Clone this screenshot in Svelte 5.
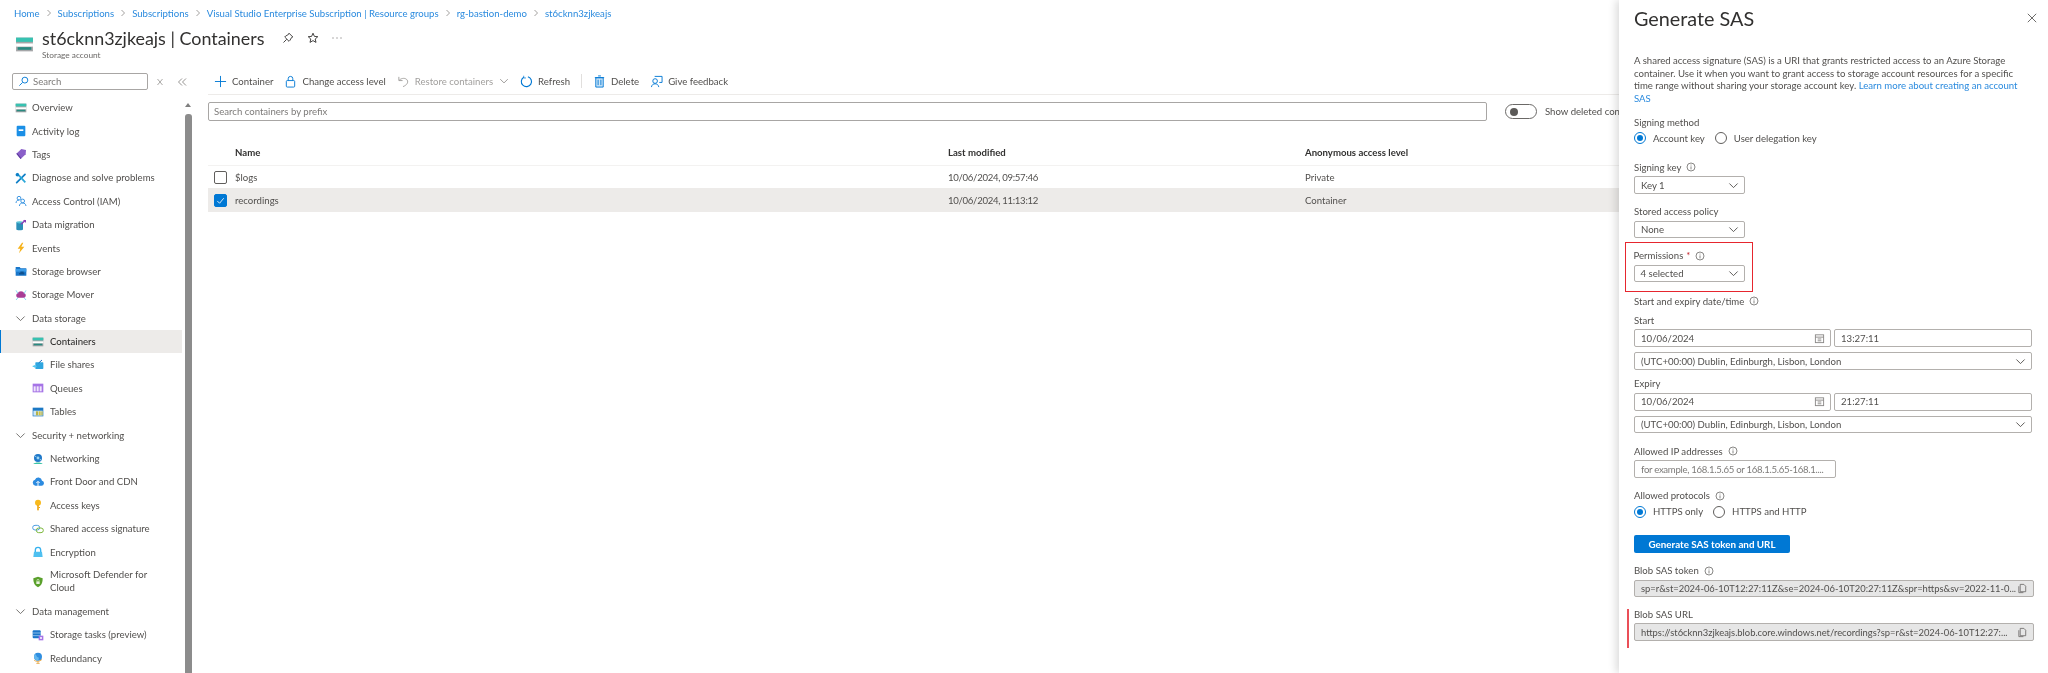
<script lang="ts">
  // inner markup of the 18x18 service icons
  const icons: Record<string, string> = {
    storage: '<rect x="1" y="2.5" width="16" height="13" fill="#a5a6a8"/><rect x="1" y="2.5" width="16" height="4" fill="#37c2b1"/><rect x="1" y="8" width="16" height="3" fill="#fff"/><rect x="2.5" y="11.5" width="13" height="2.5" fill="#2a8a80"/>',
    log: '<rect x="2.5" y="1" width="13" height="16" rx="1.5" fill="#1b8fe6"/><rect x="5.5" y="6.5" width="7" height="2.5" fill="#fff"/>',
    tag: '<path d="M2 8.5 9.5 1.5 16.5 3 16 9.5 8.5 16.5Z" fill="#8a5fc9"/><path d="M2 8.5 8.5 16.5 9.5 15.5 3.5 8Z" fill="#5c3a9c"/>',
    tools: '<path d="M2.5 16 15 3.5" stroke="#0f7fc7" stroke-width="2.6" stroke-linecap="round"/><path d="M3 2 15.5 15.5" stroke="#2aa7d8" stroke-width="2.6"/><circle cx="3.5" cy="4" r="2.6" fill="#0f7fc7"/>',
    iam: '<circle cx="6" cy="4.8" r="2.8" fill="none" stroke="#2f8fe0" stroke-width="1.4"/><path d="M1.5 12c.5-3.5 2-4.5 4.5-4.5" fill="none" stroke="#2f8fe0" stroke-width="1.4"/><circle cx="11.5" cy="9" r="2.8" fill="none" stroke="#2f8fe0" stroke-width="1.4"/><path d="M6.5 16.5c.5-3 2-4.5 5-4.5s4.5 1.5 5 4.5" fill="none" stroke="#2f8fe0" stroke-width="1.4"/>',
    migrate: '<path d="M2 5h10v10.5a5 1.5 0 0 1-10 0Z" fill="#2a8fb8"/><ellipse cx="7" cy="5" rx="5" ry="1.6" fill="#59c2d6"/><path d="M9 8 15.5 2" stroke="#8a3fb5" stroke-width="2.2"/><path d="M12 1.5h4.5V6Z" fill="#8a3fb5"/>',
    bolt: '<path d="M10.5 1 4 10h4l-2 7 8-10H9.5l3-6Z" fill="#f6b21b"/>',
    folder: '<path d="M1 3h6l1.5 2H17v11H1Z" fill="#1976c9"/><path d="M1 6h16v4H1Z" fill="#3a9be8"/><rect x="8" y="10" width="5" height="1.5" fill="#0b3f75"/><rect x="6" y="12.5" width="8" height="1.5" fill="#0b3f75"/>',
    mover: '<path d="M4 13a3.5 3.5 0 0 1 0-6.5 5.5 5.5 0 0 1 10 0 3.5 3.5 0 0 1 0 6.5Z" fill="#a83c96"/><path d="M1.5 2 4.5 7M16.5 2 13.5 7M4.5 13l-3 3.5M13.5 13l3 3.5" stroke="#50c8ef" stroke-width="1"/>',
    share: '<rect x="5" y="5" width="12" height="10" rx="1" fill="#2fa6e0"/><path d="M1 11h6" stroke="#50c8ef" stroke-width="1.6"/><path d="M1 11 4.5 9v4Z" fill="#50c8ef"/><path d="M10 6 15 1.5" stroke="#1b6fc2" stroke-width="1.5"/>',
    queue: '<rect x="1" y="2.5" width="16" height="13" fill="#a674e6"/><rect x="2.5" y="6.5" width="3" height="7.5" fill="#efe6fb"/><rect x="7" y="6.5" width="3" height="7.5" fill="#efe6fb"/><rect x="11.5" y="6.5" width="3" height="7.5" fill="#efe6fb"/>',
    table: '<rect x="1" y="2.5" width="16" height="13" fill="#1b78c4"/><rect x="2" y="7" width="14" height="7.5" fill="#cfe7f5"/><rect x="6" y="8" width="3" height="6" fill="#b7b34a"/><rect x="10" y="8" width="3" height="6" fill="#d5c43c"/><rect x="14" y="8" width="2" height="6" fill="#b7b34a"/>',
    net: '<circle cx="9" cy="7.5" r="6" fill="#1f78c9"/><circle cx="9" cy="7.5" r="2.2" fill="#9ed6f3"/><circle cx="5.5" cy="5" r="1" fill="#9ed6f3"/><circle cx="12.5" cy="10" r="1" fill="#9ed6f3"/><path d="M2 16.5c2-3 12-3 14 0Z" fill="#3dc4a6"/>',
    door: '<path d="M5 14.5a4.5 4.5 0 0 1-.5-8.8 5.5 5.5 0 0 1 10.5 1.3 3.8 3.8 0 0 1-1 7.5Z" fill="#2c8be0"/><path d="M9 16.5V8.5M6.5 10.5 9 8l2.5 2.5" fill="none" stroke="#fff" stroke-width="1.4"/>',
    key: '<circle cx="9" cy="5.5" r="4.5" fill="#f8b91c"/><rect x="7.8" y="9" width="2.4" height="8" fill="#f0a30a"/><rect x="10" y="12" width="2" height="1.5" fill="#f0a30a"/>',
    sas: '<rect x="1" y="3.5" width="10.5" height="7" rx="3.5" fill="none" stroke="#4f9fe0" stroke-width="1.5"/><rect x="6.5" y="7.5" width="10.5" height="7" rx="3.5" fill="none" stroke="#7db83c" stroke-width="1.5"/>',
    lock: '<path d="M5 9V6a4 4 0 0 1 8 0v3" fill="none" stroke="#35b1ee" stroke-width="2"/><path d="M3 8.5h12l1 8H2Z" fill="#4fc0f0"/>',
    shield: '<path d="M9 1 16 3.5c0 7-2 11-7 13.5C4 14.5 2 10.5 2 3.5Z" fill="#5aa02c"/><rect x="6.5" y="8" width="5" height="4" fill="#e8f3dc"/><path d="M7.5 8V6.5a1.5 1.5 0 0 1 3 0V8" fill="none" stroke="#e8f3dc" stroke-width="1"/>',
    tasks: '<rect x="1" y="2" width="12" height="12" rx="1.5" fill="#1b75c9"/><path d="M1 6h12M1 10h12" stroke="#bfe0f7" stroke-width="1"/><rect x="10" y="10" width="7" height="7" fill="#a674e6"/><rect x="12" y="12" width="3" height="3" fill="#e7dbf9"/>',
    globe: '<circle cx="9" cy="7" r="6" fill="#2f8ee0"/><path d="M5 3c2 2 2 5 4 5s1 4 0 5c-3 0-6-3-6-6s1-3 3-4Z" fill="#63b7ee"/><path d="M3 12c3 3 8 3 12-1M9 14v3M6.5 17h5" fill="none" stroke="#e8a33d" stroke-width="1.3"/>'
  };

  type Row = { label: string; icon?: string; sub?: boolean; group?: boolean; active?: boolean };

  const nav: Row[] = [
    { label: 'Overview', icon: 'storage' },
    { label: 'Activity log', icon: 'log' },
    { label: 'Tags', icon: 'tag' },
    { label: 'Diagnose and solve problems', icon: 'tools' },
    { label: 'Access Control (IAM)', icon: 'iam' },
    { label: 'Data migration', icon: 'migrate' },
    { label: 'Events', icon: 'bolt' },
    { label: 'Storage browser', icon: 'folder' },
    { label: 'Storage Mover', icon: 'mover' },
    { label: 'Data storage', group: true },
    { label: 'Containers', icon: 'storage', sub: true, active: true },
    { label: 'File shares', icon: 'share', sub: true },
    { label: 'Queues', icon: 'queue', sub: true },
    { label: 'Tables', icon: 'table', sub: true },
    { label: 'Security + networking', group: true },
    { label: 'Networking', icon: 'net', sub: true },
    { label: 'Front Door and CDN', icon: 'door', sub: true },
    { label: 'Access keys', icon: 'key', sub: true },
    { label: 'Shared access signature', icon: 'sas', sub: true },
    { label: 'Encryption', icon: 'lock', sub: true },
    { label: 'Microsoft Defender for Cloud', icon: 'shield', sub: true },
    { label: 'Data management', group: true },
    { label: 'Storage tasks (preview)', icon: 'tasks', sub: true },
    { label: 'Redundancy', icon: 'globe', sub: true }
  ];

  const crumbs = ['Home', 'Subscriptions', 'Subscriptions', 'Visual Studio Enterprise Subscription | Resource groups', 'rg-bastion-demo', 'st6cknn3zjkeajs'];

  const containers = [
    { name: '$logs', modified: '10/06/2024, 09:57:46', access: 'Private', selected: false },
    { name: 'recordings', modified: '10/06/2024, 11:13:12', access: 'Container', selected: true }
  ];

  const timezone = '(UTC+00:00) Dublin, Edinburgh, Lisbon, London';
</script>

{#snippet chevron()}
  <svg class="chev" viewBox="0 0 12 12"><path d="M1.5 3.8 6 8.3l4.5-4.5" fill="none" stroke="currentColor" stroke-width="1"/></svg>
{/snippet}

{#snippet info()}
  <svg class="info" viewBox="0 0 10 10"><circle cx="5" cy="5" r="4" fill="none" stroke="#6b6967" stroke-width=".8"/><path d="M5 4.4v3M5 2.6v.9" stroke="#6b6967" stroke-width=".8"/></svg>
{/snippet}

{#snippet select(value: string, cls: string)}
  <div class="control select {cls}"><span>{value}</span>{@render chevron()}</div>
{/snippet}

{#snippet radio(label: string, on: boolean)}
  <span class="radio" class:on><i></i></span><span class="radio-label">{label}</span>
{/snippet}

{#snippet copy()}
  <svg class="copy" viewBox="0 0 12 12"><path d="M3.5 1.5h4l2 2v6h-6Z" fill="none" stroke="#6b6967" stroke-width=".9"/><path d="M2 3.5v7h5" fill="none" stroke="#6b6967" stroke-width=".9"/></svg>
{/snippet}

{#snippet dateRow(date: string, time: string)}
  <div class="date-row">
    <div class="control date">
      <span>{date}</span>
      <svg class="cal" viewBox="0 0 12 12"><rect x="1.5" y="2" width="9" height="8.5" fill="none" stroke="#8a8886"/><path d="M1.5 4.5h9M4 6.5h4M4 8.5h4" stroke="#8a8886"/></svg>
    </div>
    <div class="control time">{time}</div>
  </div>
{/snippet}

<div class="page">
  <nav class="crumbs">
    {#each crumbs as crumb, i}
      {#if i > 0}<svg class="sep" viewBox="0 0 8 8"><path d="M2.5 1 5.5 4l-3 3" fill="none" stroke="#8a8886" stroke-width=".8"/></svg>{/if}
      <a href="#top">{crumb}</a>
    {/each}
  </nav>

  <header class="title-row">
    <svg class="title-icon" viewBox="0 0 18 18">{@html icons.storage}</svg>
    <div class="title-text">
      <h1>st6cknn3zjkeajs | Containers</h1>
      <div class="subtitle">Storage account</div>
    </div>
    <svg class="head-act pin" viewBox="0 0 12 12"><path d="M7 1.2 10.8 5 9.6 5.5 7.8 8.5 7 9.3 2.7 5 3.5 4.2 6.5 2.4ZM4.7 7.3 1.5 10.5" fill="none" stroke="#323130" stroke-width=".9"/></svg>
    <svg class="head-act star" viewBox="0 0 12 12"><path d="M6 1.2 7.4 4.4 10.8 4.7 8.2 7 9 10.4 6 8.6 3 10.4 3.8 7 1.2 4.7 4.6 4.4Z" fill="none" stroke="#323130" stroke-width=".9"/></svg>
    <svg class="head-act more" viewBox="0 0 12 12"><path d="M1.5 6h1M5.5 6h1M9.5 6h1" stroke="#605e5c"/></svg>
  </header>

  <div class="body">
    <aside class="sidebar">
      <div class="side-tools">
        <div class="side-search">
          <svg viewBox="0 0 12 12"><circle cx="7.5" cy="4.5" r="3.2" fill="none" stroke="#0078d4"/><path d="M5 7 1.5 10.5" stroke="#0078d4"/></svg>
          <span>Search</span>
        </div>
        <svg class="side-btn clear" viewBox="0 0 10 10"><path d="M2.5 2 7.5 8M7.5 2 2.5 8" stroke="#a19f9d" stroke-width=".9"/></svg>
        <svg class="side-btn collapse" viewBox="0 0 10 10"><path d="M5 1.5 1.5 5 5 8.5M9 1.5 5.5 5 9 8.5" fill="none" stroke="#8a8886" stroke-width=".9"/></svg>
      </div>
      <div class="nav-wrap">
        <ul class="nav">
          {#each nav as row}
            <li class:sub={row.sub} class:active={row.active} class:tall={row.label.startsWith('Microsoft')}>
              {#if row.group}
                <span class="group-chev">{@render chevron()}</span>
              {:else}
                <svg class="nav-icon" viewBox="0 0 18 18">{@html icons[row.icon ?? 'storage']}</svg>
              {/if}
              <span class="nav-label">{row.label}</span>
            </li>
          {/each}
        </ul>
        <div class="scrollbar"><b></b><span></span></div>
      </div>
    </aside>

    <main class="main">
      <div class="toolbar">
        <button>
          <svg viewBox="0 0 14 14"><path d="M7 1v12M1 7h12" stroke="#0078d4" stroke-width="1"/></svg>Container
        </button>
        <button>
          <svg viewBox="0 0 14 14"><rect x="2.5" y="6" width="9" height="7" rx="1" fill="none" stroke="#0078d4"/><path d="M4.5 6V4a2.5 2.5 0 0 1 5 0v2" fill="none" stroke="#0078d4"/></svg>Change access level
        </button>
        <button class="disabled">
          <svg viewBox="0 0 14 14"><path d="M2 2v4h4M2.5 5.5C5 3 9.5 3 11 5.5S10.5 11 6.5 12.5" fill="none" stroke="#a19f9d"/></svg>Restore containers{@render chevron()}
        </button>
        <button>
          <svg viewBox="0 0 14 14"><path d="M8.5 1.8A5.5 5.5 0 1 1 4 2.4" fill="none" stroke="#0078d4" stroke-width="1.2"/><path d="M4 .8v2.4h2.4" fill="none" stroke="#0078d4" stroke-width=".8"/></svg>Refresh
        </button>
        <span class="divider"></span>
        <button>
          <svg viewBox="0 0 14 14"><path d="M3 3h8v10H3Z" fill="#d0e7f8" stroke="#0078d4"/><path d="M2 2.8h10M5.5 1h3M5.5 5v6M8.5 5v6" stroke="#0078d4"/></svg>Delete
        </button>
        <button>
          <svg viewBox="0 0 14 14"><path d="M5 1.5h8V8H10" fill="none" stroke="#0078d4"/><circle cx="5.5" cy="6.5" r="2.5" fill="none" stroke="#0078d4"/><path d="M1.5 13c.5-2.5 2-3.5 4-3.5s3.5 1 4 3.5" fill="none" stroke="#0078d4"/></svg>Give feedback
        </button>
      </div>

      <div class="filter-row">
        <div class="prefix">Search containers by prefix</div>
        <span class="toggle"><i></i></span>
        <span class="toggle-label">Show deleted containers</span>
      </div>

      <div class="table">
        <div class="tr head">
          <span></span><span>Name</span><span>Last modified</span><span>Anonymous access level</span>
        </div>
        {#each containers as c}
          <div class="tr" class:selected={c.selected}>
            <span class="check" class:on={c.selected}>
              {#if c.selected}<svg viewBox="0 0 12 12"><path d="M2.5 6.5 5 9l4.5-5.5" fill="none" stroke="#fff" stroke-width=".9"/></svg>{/if}
            </span>
            <span>{c.name}</span><span class="stamp">{c.modified}</span><span>{c.access}</span>
          </div>
        {/each}
      </div>
    </main>
  </div>

  <!-- context pane lies over the blade -->
  <section class="pane">
    <div class="pane-head">
      <h2>Generate SAS</h2>
      <svg viewBox="0 0 10 10"><path d="M.8.8l8.4 8.4M9.2.8.8 9.2" stroke="#484644" stroke-width=".8"/></svg>
    </div>
    <p class="intro">
      A shared access signature (SAS) is a URI that grants restricted access to an Azure Storage<br />
      container. Use it when you want to grant access to storage account resources for a specific<br />
      time range without sharing your storage account key. <a href="#top">Learn more about creating an account<br />
      SAS</a>
    </p>

    <div class="label m-10">Signing method</div>
    <div class="radios m-2">
      {@render radio('Account key', true)}
      {@render radio('User delegation key', false)}
    </div>

    <div class="label m-15">Signing key {@render info()}</div>
    {@render select('Key 1', 'short m-2')}

    <div class="label m-11">Stored access policy</div>
    {@render select('None', 'short m-2')}

    <div class="callout">
      <div class="label">Permissions <em>*</em> {@render info()}</div>
      {@render select('4 selected', 'short m-2')}
    </div>

    <div class="label m-2">Start and expiry date/time {@render info()}</div>
    <div class="label m-5">Start</div>
    <div class="m-2">{@render dateRow('10/06/2024', '13:27:11')}</div>
    {@render select(timezone, 'm-5')}

    <div class="label m-7">Expiry</div>
    <div class="m-2">{@render dateRow('10/06/2024', '21:27:11')}</div>
    {@render select(timezone, 'm-5')}

    <div class="label m-11">Allowed IP addresses {@render info()}</div>
    <div class="control ip m-2"><span class="placeholder">for example, 168.1.5.65 or 168.1.5.65-168.1....</span></div>

    <div class="label m-11">Allowed protocols {@render info()}</div>
    <div class="radios m-2 protocols">
      {@render radio('HTTPS only', true)}
      {@render radio('HTTPS and HTTP', false)}
    </div>

    <button class="primary m-16">Generate SAS token and URL</button>

    <div class="label m-11">Blob SAS token {@render info()}</div>
    <div class="control readonly m-2">
      <span>sp=r&amp;st=2024-06-10T12:27:11Z&amp;se=2024-06-10T20:27:11Z&amp;spr=https&amp;sv=2022-11-0...</span>{@render copy()}
    </div>

    <div class="url-field m-10">
      <div class="label">Blob SAS URL</div>
      <div class="control readonly m-2">
        <span>https://st6cknn3zjkeajs.blob.core.windows.net/recordings?sp=r&amp;st=2024-06-10T12:27:...</span>{@render copy()}
      </div>
    </div>
  </section>
</div>

<style>
  :global(body) {
    margin: 0;
    background: #fff;
  }

  .page {
    position: relative;
    width: 2048px;
    height: 673px;
    overflow: hidden;
    font-family: Lato, "Noto Sans", sans-serif;
    font-size: 9.6px;
    color: #514f4d;
    filter: blur(0.3px);
  }

  a {
    color: #2a8ade;
    text-decoration: none;
  }

  /* header */
  .crumbs {
    display: flex;
    align-items: center;
    height: 26px;
    padding-left: 14px;
    gap: 4px;
  }

  .sep {
    width: 8px;
    height: 8px;
    margin: 0 1px;
  }

  .title-row {
    display: flex;
    align-items: flex-start;
    height: 40px;
    padding-left: 15px;
  }

  .title-icon {
    width: 19px;
    height: 19px;
    margin: 9px 8px 0 0;
  }

  .title-text {
    width: 228px;
  }

  h1 {
    margin: 0;
    font-size: 17.9px;
    font-weight: 400;
    line-height: 24px;
    color: #323130;
    white-space: nowrap;
  }

  .subtitle {
    font-size: 8.3px;
    line-height: 10px;
    color: #6b6967;
    margin-top: 0;
  }

  .head-act {
    width: 12px;
    height: 12px;
    margin-top: 6px;
  }

  .pin {
    margin-left: 12px;
  }

  .star {
    margin-left: 13px;
  }

  .more {
    margin-left: 12px;
  }

  .body {
    display: flex;
  }

  /* sidebar */
  .sidebar {
    width: 192px;
    flex: none;
  }

  .side-tools {
    display: flex;
    align-items: center;
    padding: 7px 0 6px 12px;
    height: 17px;
  }

  .side-search {
    display: flex;
    align-items: center;
    gap: 4px;
    width: 136px;
    height: 17px;
    box-sizing: border-box;
    border: 1px solid #a8a6a4;
    border-radius: 2px;
    padding-left: 5px;
    color: #7d7b79;
  }

  .side-search svg {
    width: 11px;
    height: 11px;
  }

  .side-btn {
    width: 10px;
    height: 10px;
  }

  .clear {
    margin-left: 7px;
  }

  .collapse {
    margin-left: 12px;
  }

  .nav-wrap {
    display: flex;
    height: 577px;
    overflow: hidden;
  }

  .nav {
    list-style: none;
    margin: 0;
    padding: 0;
    width: 182px;
    flex: none;
  }

  .nav li {
    display: flex;
    align-items: center;
    height: 23.4px;
    padding-left: 15px;
    box-sizing: border-box;
    white-space: nowrap;
  }

  .nav li.tall {
    height: 36px;
    line-height: 12.6px;
    white-space: normal;
  }

  .tall .nav-label {
    width: 108px;
    flex: none;
  }

  .nav li.sub {
    padding-left: 32px;
  }

  .nav li.active {
    background: #edebe9;
    box-shadow: inset 1px 0 0 #0078d4;
    color: #323130;
    font-weight: 500;
  }

  .nav-icon {
    width: 12px;
    height: 12px;
    flex: none;
    margin-right: 5px;
  }

  .sub .nav-icon {
    margin-right: 6px;
  }

  .group-chev {
    display: flex;
    width: 12px;
    margin-right: 5px;
    color: #6b6967;
  }

  .scrollbar {
    position: relative;
    width: 8px;
    margin-left: 2px;
  }

  .scrollbar b {
    display: block;
    width: 0;
    height: 0;
    margin: 7px 0 0 0.5px;
    border: 3.5px solid transparent;
    border-top: 0;
    border-bottom: 4px solid #7f7f7f;
  }

  .scrollbar span {
    display: block;
    width: 7px;
    height: 600px;
    margin: 7px 0 0 0.5px;
    background: #8c8c8c;
    border-radius: 3px 3px 0 0;
  }

  /* main blade */
  .main {
    flex: 1;
    padding-left: 16px;
    min-width: 0;
  }

  .toolbar {
    display: flex;
    align-items: center;
    height: 28px;
    box-sizing: content-box;
    padding: 0 0 0 6px;
    border-bottom: 1px solid #edebe9;
  }

  .toolbar button {
    display: flex;
    align-items: center;
    gap: 5px;
    border: 0;
    padding: 2px 0 0;
    margin-right: 11px;
    background: none;
    color: inherit;
    font: inherit;
    white-space: nowrap;
  }

  .toolbar button svg {
    width: 13px;
    height: 13px;
  }

  .toolbar .disabled {
    color: #a19f9d;
  }

  .toolbar .disabled .chev {
    width: 10px;
    height: 10px;
    margin-left: 1px;
    color: #8a8886;
  }

  .divider {
    width: 1px;
    height: 14px;
    margin: 2px 11px 0 0;
    background: #e1dfdd;
  }

  .filter-row {
    display: flex;
    align-items: center;
    margin-top: 7px;
    white-space: nowrap;
  }

  .prefix {
    width: 1279px;
    height: 19px;
    line-height: 17px;
    box-sizing: border-box;
    border: 1px solid #a8a6a4;
    border-radius: 2px;
    padding-left: 5px;
    color: #7d7b79;
    flex: none;
  }

  .toggle {
    display: block;
    flex: none;
    width: 32px;
    height: 15px;
    margin-left: 18px;
    box-sizing: border-box;
    border: 1px solid #6b6967;
    border-radius: 8px;
    position: relative;
  }

  .toggle i {
    position: absolute;
    left: 4px;
    top: 2.5px;
    width: 8px;
    height: 8px;
    border-radius: 50%;
    background: #5c5a58;
  }

  .toggle-label {
    margin-left: 8px;
  }

  .table {
    margin-top: 19px;
  }

  .tr {
    display: grid;
    grid-template-columns: 27px 713px 357px 1fr;
    align-items: center;
    height: 23px;
    box-sizing: border-box;
    border-bottom: 1px solid #edebe9;
  }

  .tr.head {
    height: 26px;
    font-weight: 700;
    color: #323130;
    border-bottom-color: #f3f2f1;
  }

  .tr.selected {
    background: #edebe9;
    border-bottom: 0;
  }

  .stamp {
    letter-spacing: -0.3px;
  }

  .check {
    display: block;
    width: 13px;
    height: 13px;
    margin-left: 6px;
    box-sizing: border-box;
    border: 1px solid #605e5c;
    border-radius: 2px;
  }

  .check.on {
    background: #0078d4;
    border-color: #0078d4;
  }

  .check svg {
    display: block;
    width: 11px;
    height: 11px;
  }

  /* context pane */
  .pane {
    position: absolute;
    top: 0;
    right: 0;
    width: 429px;
    height: 673px;
    box-sizing: border-box;
    padding: 5px 16px 0 15px;
    background: #fff;
    box-shadow: -3px 0 8px rgba(0, 0, 0, 0.14);
  }

  .pane-head {
    display: flex;
    align-items: center;
    justify-content: space-between;
    height: 25px;
  }

  h2 {
    margin: 0;
    font-size: 19.8px;
    font-weight: 400;
    color: #323130;
  }

  .pane-head svg {
    width: 10px;
    height: 10px;
    margin-right: -5px;
  }

  .intro {
    margin: 25px 0 0;
    line-height: 12.6px;
    white-space: nowrap;
  }

  .m-2 { margin-top: 2px; }
  .m-5 { margin-top: 5px; }
  .m-7 { margin-top: 7px; }
  .m-10 { margin-top: 10px; }
  .m-11 { margin-top: 11px; }
  .m-15 { margin-top: 15px; }
  .m-16 { margin-top: 16px; }

  .label {
    display: flex;
    align-items: center;
    gap: 3px;
    height: 14px;
    white-space: nowrap;
  }

  .label em {
    color: #c4262e;
    font-style: normal;
  }

  .info {
    width: 10px;
    height: 10px;
    margin-left: 2px;
  }

  .radios {
    display: flex;
    align-items: center;
    height: 14px;
  }

  .radio {
    display: flex;
    align-items: center;
    justify-content: center;
    width: 12px;
    height: 12px;
    box-sizing: border-box;
    border: 1px solid #605e5c;
    border-radius: 50%;
    flex: none;
  }

  .radio.on {
    border-color: #0078d4;
  }

  .radio.on i {
    width: 6px;
    height: 6px;
    border-radius: 50%;
    background: #0078d4;
  }

  .radio-label {
    margin: 0 10px 0 7px;
  }

  .control {
    display: flex;
    align-items: center;
    justify-content: space-between;
    height: 17.5px;
    box-sizing: border-box;
    border: 1px solid #b3b0ad;
    border-radius: 2px;
    padding: 0 5px 0 6px;
    white-space: nowrap;
  }

  .select {
    width: 398px;
  }

  .select.short {
    width: 111px;
  }

  .chev {
    width: 11px;
    height: 11px;
    flex: none;
  }

  .callout {
    width: 128px;
    height: 50px;
    margin: 4px 0 0 -9px;
    box-sizing: border-box;
    border: 1.5px solid #e6262e;
    padding: 5.5px 0 0 7.5px;
  }

  .date-row {
    display: flex;
    gap: 3px;
  }

  .date {
    width: 197px;
    height: 18px;
  }

  .time {
    flex: 1;
    height: 18px;
  }

  .cal {
    width: 11px;
    height: 11px;
  }

  .ip {
    width: 202px;
  }

  .placeholder {
    color: #7d7b79;
    letter-spacing: -0.3px;
  }

  .primary {
    display: block;
    width: 156px;
    height: 18px;
    border: 0;
    border-radius: 2px;
    padding: 0;
    background: #0078d4;
    color: #fff;
    font: inherit;
    font-size: 9.8px;
    font-weight: 700;
  }

  .readonly {
    width: 400px;
    font-size: 9.4px;
    background: #e6e6e6;
    border-color: #b3b0ad;
  }

  .copy {
    width: 11px;
    height: 11px;
    flex: none;
  }

  .url-field {
    position: relative;
  }

  .url-field::before {
    content: "";
    position: absolute;
    left: -7px;
    top: 2px;
    width: 1.5px;
    height: 39px;
    background: #ea4f58;
  }
</style>
